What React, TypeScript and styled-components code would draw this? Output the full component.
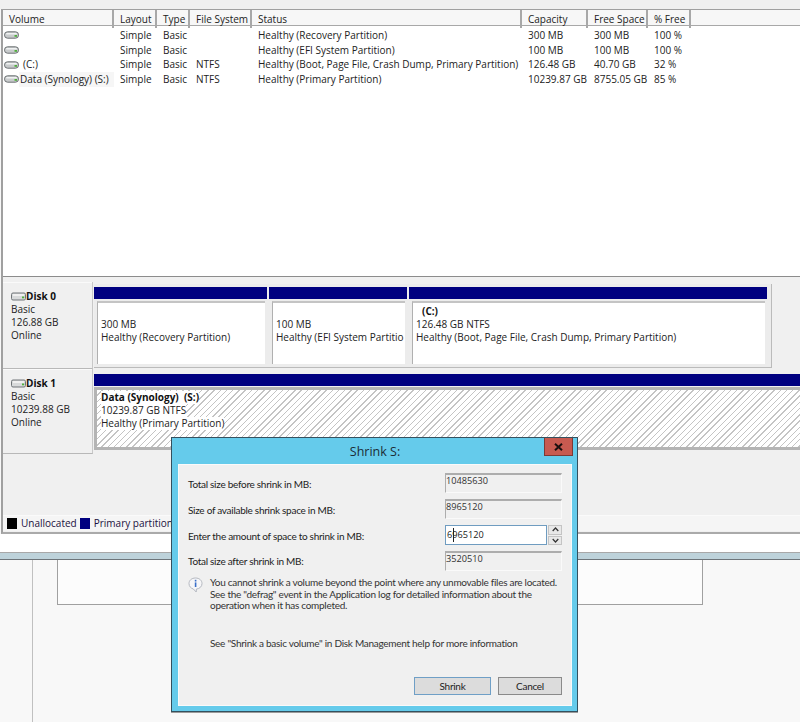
import React from "react";
import styled, { createGlobalStyle } from "styled-components";

const Global = createGlobalStyle`
  html, body { margin: 0; padding: 0; background: #f8f8f8; overflow: hidden; }
  #root { width: 800px; height: 722px; }
`;

const Page = styled.div`
  position: relative;
  width: 800px;
  height: 722px;
  display: flex;
  flex-direction: column;
  overflow: hidden;
  font-family: "Open Sans", "Liberation Sans", sans-serif;
  font-size: 10px;
  color: #222;
  line-height: 13px;
`;
const TopStrip = styled.div`
  height: 9px;
  flex: none;
  background: #f0f0f0;
`;
const Console = styled.div`
  height: 523px;
  flex: none;
  margin-left: 1px;
  border-left: 2px solid #a0a0a0;
  border-bottom: 2px solid #aaa;
  display: flex;
  flex-direction: column;
`;
const ListPane = styled.div`
  height: 266px;
  flex: none;
  background: #fff;
  border-top: 1px solid #a0a0a0;
`;
const COLS = "111px 43px 33px 62px 270px 66px 60px 43px 1fr";
const HeaderRow = styled.div`
  display: grid;
  grid-template-columns: ${COLS};
  height: 15px;
  background: #f7f7f7;
  border-bottom: 1px solid #a8a8a8;
  margin-bottom: 2px;
`;
const HeaderCell = styled.div`
  padding-left: 6px;
  border-right: 2px solid #a8a8a8;
  box-sizing: border-box;
  line-height: 18px;
  white-space: nowrap;
  &:last-child { border-right: none; }
`;
const Row = styled.div`
  display: grid;
  grid-template-columns: ${COLS};
  height: 14.7px;
  line-height: 14.7px;
`;
const Cell = styled.div`
  padding-left: 6px;
  white-space: nowrap;
`;
const VolumeCell = styled.div<{ $selected?: boolean; $named?: boolean }>`
  display: flex;
  align-items: center;
  gap: ${(p) => (p.$named ? "1px" : "4px")};
  padding-left: 1px;
  white-space: nowrap;
  ${(p) => (p.$selected ? "background: linear-gradient(90deg, #fff 14%, #f6f6f6 14%);" : "")}
`;
const DiskArea = styled.div`
  flex: 1;
  background: #f0f0f0;
  border-top: 1px solid #8c8c8c;
  padding-top: 5px;
  display: flex;
  flex-direction: column;
`;
const DiskRow = styled.div<{ $h: number }>`
  height: ${(p) => p.$h}px;
  flex: none;
  display: flex;
`;
const DiskCard = styled.div`
  width: 90px;
  flex: none;
  box-sizing: border-box;
  padding: 8px 0 0 8px;
  background: #f0f0f0;
  border-right: 1px solid #c8c8c8;
  border-bottom: 1px solid #b8b8b8;
  box-shadow: inset 0 1px 0 #fafafa;
`;
const DiskName = styled.div`
  display: flex;
  align-items: center;
  gap: 0;
  font-weight: 700;
  color: #111;
`;
const DiskLine = styled.div``;
const Group = styled.div`
  flex: 1;
  display: flex;
  gap: 2px;
  margin: 2px 28px 1px 1px;
  padding: 3px 2px 3px 0;
  background: #ececec;
  border-right: 1px solid #bbb;
  border-bottom: 1px solid #bbb;
`;
const Partition = styled.div<{ $w: number }>`
  width: ${(p) => p.$w}px;
  flex: none;
  display: flex;
  flex-direction: column;
`;
const NavyBar = styled.div<{ $h: number }>`
  height: ${(p) => p.$h}px;
  flex: none;
  background: #000080;
`;
const PartBody = styled.div`
  flex: 1;
  margin: 2px 2px 0 3px;
  padding: 2px 0 0 3px;
  background: #fff;
  border-top: 2px solid #c4c4c4;
  border-left: 1px solid #b0b0b0;
  overflow: hidden;
  white-space: nowrap;
`;
const Bold = styled.div<{ $indent?: number }>`
  height: 13px;
  font-weight: 700;
  margin-left: ${(p) => p.$indent ?? 0}px;
  color: #111;
`;
const Disk1Group = styled.div`
  flex: 1;
  margin: 5px 0 4px 1px;
  display: flex;
  flex-direction: column;
`;
const Hatched = styled.div`
  flex: 1;
  margin-top: 1px;
  border: 3px solid #b4b4b4;
  border-right: none;
  padding: 1px 0 0 4px;
  background: repeating-linear-gradient(135deg, #fff 0, #fff 3.4px, #c4c4c4 3.4px, #c4c4c4 4.4px);
`;
const LabelLine = styled.div`
  width: fit-content;
  background: #fff;
`;
const Spacer = styled.div`
  flex: 1;
`;
const Legend = styled.div`
  height: 15px;
  flex: none;
  margin-bottom: 1px;
  display: flex;
  align-items: center;
  background: #f5f5f5;
  border-top: 1px solid #fafafa;
  padding-left: 1px;
  line-height: 15px;
`;
const Swatch = styled.span<{ $c: string }>`
  width: 10px;
  height: 11px;
  flex: none;
  background: ${(p) => p.$c};
  margin-right: 4px;
  margin-left: 3px;
`;
const LegendText = styled.span`
  color: #1b1040;
`;
const WhiteStrip = styled.div`
  height: 18px;
  flex: none;
  background: #fff;
  border-bottom: 1px solid #a8a8a8;
`;
const BlueStrip = styled.div`
  height: 6px;
  flex: none;
  background: #bdd2da;
  border-bottom: 1px solid #6d7479;
`;
const Lower = styled.div`
  flex: 1;
  background: #f8f8f8;
  display: flex;
`;
const TreeColumn = styled.div`
  width: 32px;
  flex: none;
  border-right: 1px solid #c0c0c0;
`;
const PreviewBox = styled.div`
  width: 644px;
  height: 44px;
  margin-left: 24px;
  background: #fcfcfc;
  border-right: 1px solid #a0a0a0;
  border-bottom: 1px solid #a0a0a0;
  border-left: 1px solid #a0a0a0;
`;

const Dialog = styled.div`
  position: absolute;
  left: 171px;
  top: 437px;
  width: 407px;
  height: 275px;
  box-sizing: border-box;
  background: #65cbeb;
  border: 1px solid #34505e;
  box-shadow: 0 1px 0 #9a9a9a;
  display: flex;
  flex-direction: column;
  padding: 0 5px 5px 6px;
  color: #222;
  font-family: "Lato", "Open Sans", sans-serif;
`;
const TitleBar = styled.div`
  height: 26px;
  flex: none;
  position: relative;
  display: flex;
  align-items: center;
  justify-content: center;
  box-sizing: border-box;
  font-family: "Open Sans", sans-serif;
  font-size: 12.5px;
  color: #1c2c36;
`;
const CloseButton = styled.div`
  position: absolute;
  right: -1px;
  top: 0;
  width: 29px;
  height: 18px;
  box-sizing: border-box;
  background: #c75a50;
  border: 1px solid #7b3a36;
  border-top: none;
  display: flex;
  align-items: center;
  justify-content: center;
`;
const DialogBody = styled.div`
  flex: 1;
  background: #f0f0f0;
  border: 1px solid #fafafa;
  box-sizing: border-box;
  padding: 6px 9px 10px 9px;
  display: flex;
  flex-direction: column;
  letter-spacing: -0.28px;
`;
const FormRow = styled.div<{ $h: number }>`
  height: ${(p) => p.$h}px;
  flex: none;
  display: flex;
  align-items: center;
  justify-content: space-between;
`;
const FieldValue = styled.div`
  font-family: "Open Sans", sans-serif;
  font-size: 9.2px;
  letter-spacing: 0;
`;
const ReadField = styled(FieldValue)`
  width: 117px;
  height: 20px;
  margin-bottom: 2px;
  box-sizing: border-box;
  background: #f0f0f0;
  border-top: 2px solid #adadad;
  border-left: 1px solid #adadad;
  border-right: 1px solid #fafafa;
  border-bottom: 1px solid #fafafa;
  line-height: 11px;
  padding-left: 0;
  color: #333;
`;
const SpinWrap = styled.div`
  width: 117px;
  height: 20px;
  margin-bottom: 2px;
  display: flex;
  gap: 1px;
`;
const SpinInput = styled(FieldValue)`
  flex: 1;
  background: #fff;
  border: 1px solid #6f9cc0;
  box-sizing: border-box;
  line-height: 17px;
  padding-left: 1px;
  position: relative;
  color: #222;
`;
const Caret = styled.span`
  position: absolute;
  left: 7px;
  top: 2px;
  width: 1px;
  height: 14px;
  background: #222;
`;
const SpinButtons = styled.div`
  width: 14px;
  display: flex;
  flex-direction: column;
  gap: 1px;
`;
const SpinButton = styled.div`
  flex: 1;
  background: #e8e8e8;
  border: 1px solid #c4c4c4;
  box-sizing: border-box;
  display: flex;
  align-items: center;
  justify-content: center;
`;
const InfoRow = styled.div`
  margin-top: 3px;
  display: flex;
  gap: 7px;
`;
const InfoText = styled.div`
  width: 356px;
  font-size: 10px;
  line-height: 11.5px;
  color: #333;
`;
const HelpText = styled.div`
  margin: 25px 0 0 22px;
  font-size: 10px;
  line-height: 12px;
  color: #333;
`;
const Buttons = styled.div`
  margin-top: auto;
  display: flex;
  justify-content: flex-end;
  gap: 7px;
`;
const DialogButton = styled.div<{ $w: number; $default?: boolean }>`
  width: ${(p) => p.$w}px;
  height: 18px;
  box-sizing: border-box;
  background: #dcdcdc;
  border: 1px solid ${(p) => (p.$default ? "#6f9fc6" : "#8a8a8a")};
  text-align: center;
  line-height: 16px;
  font-size: 10px;
  color: #222;
`;

const DriveIcon = () => (
  <svg width="15" height="8" viewBox="0 0 15 8">
    <rect x="0.5" y="0.8" width="14" height="6.4" rx="3" fill="#c8cbcc" stroke="#6d7274" strokeWidth="1" />
    <rect x="2" y="2" width="11" height="1.6" rx="0.8" fill="#f0f2f2" />
    <rect x="10.5" y="4" width="2.5" height="1.8" fill="#4fae3c" />
  </svg>
);
const DiskIcon = () => (
  <svg width="15" height="9" viewBox="0 0 15 9">
    <rect x="0.5" y="1" width="14" height="7" rx="1.5" fill="#d8dadb" stroke="#707578" strokeWidth="1" />
    <rect x="2" y="2.2" width="11" height="1.6" fill="#f5f6f6" />
    <rect x="11" y="4.5" width="2.2" height="1.8" fill="#4fae3c" />
  </svg>
);
const InfoIcon = () => (
  <svg width="15" height="16" viewBox="0 0 15 16" style={{ flex: "none" }}>
    <path d="M7.5 1 C3.6 1 1 3.4 1 6.6 C1 9.4 3 11.4 5.4 12 L8.2 15 L8.4 12.1 C11.6 11.7 14 9.6 14 6.6 C14 3.4 11.4 1 7.5 1 Z" fill="#f6f6f8" stroke="#b4b8c0" strokeWidth="1" />
    <rect x="6.8" y="2.8" width="1.6" height="1.7" fill="#3a6fc8" />
    <rect x="6.8" y="5.4" width="1.6" height="4.6" fill="#3a6fc8" />
  </svg>
);
const CloseGlyph = () => (
  <svg width="9" height="8" viewBox="0 0 9 8">
    <path d="M1 0.8 L8 7.2 M8 0.8 L1 7.2" stroke="#1a0f0f" strokeWidth="2" fill="none" />
  </svg>
);
const Chevron = ({ up }: { up?: boolean }) => (
  <svg width="7" height="5" viewBox="0 0 7 5">
    <path d={up ? "M0.7 4 L3.5 1 L6.3 4" : "M0.7 1 L3.5 4 L6.3 1"} stroke="#333" strokeWidth="1.2" fill="none" />
  </svg>
);

const headers = ["Volume", "Layout", "Type", "File System", "Status", "Capacity", "Free Space", "% Free", ""];
const rows = [
  { vol: "", fs: "", status: "Healthy (Recovery Partition)", cap: "300 MB", free: "300 MB", pct: "100 %" },
  { vol: "", fs: "", status: "Healthy (EFI System Partition)", cap: "100 MB", free: "100 MB", pct: "100 %" },
  { vol: "(C:)", fs: "NTFS", status: "Healthy (Boot, Page File, Crash Dump, Primary Partition)", cap: "126.48 GB", free: "40.70 GB", pct: "32 %" },
  { vol: "Data (Synology) (S:)", fs: "NTFS", status: "Healthy (Primary Partition)", cap: "10239.87 GB", free: "8755.05 GB", pct: "85 %", selected: true },
];

export default function App() {
  return (
    <Page>
      <Global />
      <TopStrip />
      <Console>
        <ListPane>
          <HeaderRow>
            {headers.map((h, i) => (
              <HeaderCell key={i}>{h}</HeaderCell>
            ))}
          </HeaderRow>
          {rows.map((r, i) => (
            <Row key={i}>
              <VolumeCell $selected={r.selected} $named={r.selected}>
                <DriveIcon />
                {r.vol}
              </VolumeCell>
              <Cell>Simple</Cell>
              <Cell>Basic</Cell>
              <Cell>{r.fs}</Cell>
              <Cell>{r.status}</Cell>
              <Cell>{r.cap}</Cell>
              <Cell>{r.free}</Cell>
              <Cell>{r.pct}</Cell>
            </Row>
          ))}
        </ListPane>
        <DiskArea>
          <DiskRow $h={87}>
            <DiskCard>
              <DiskName><DiskIcon />Disk 0</DiskName>
              <DiskLine>Basic</DiskLine>
              <DiskLine>126.88 GB</DiskLine>
              <DiskLine>Online</DiskLine>
            </DiskCard>
            <Group>
              <Partition $w={173}>
                <NavyBar $h={12} />
                <PartBody>
                  <Bold />
                  <div>300 MB</div>
                  <div>Healthy (Recovery Partition)</div>
                </PartBody>
              </Partition>
              <Partition $w={138}>
                <NavyBar $h={12} />
                <PartBody>
                  <Bold />
                  <div>100 MB</div>
                  <div>Healthy (EFI System Partitio</div>
                </PartBody>
              </Partition>
              <Partition $w={358}>
                <NavyBar $h={12} />
                <PartBody>
                  <Bold $indent={6}>(C:)</Bold>
                  <div>126.48 GB NTFS</div>
                  <div>Healthy (Boot, Page File, Crash Dump, Primary Partition)</div>
                </PartBody>
              </Partition>
            </Group>
          </DiskRow>
          <DiskRow $h={85}>
            <DiskCard>
              <DiskName><DiskIcon />Disk 1</DiskName>
              <DiskLine>Basic</DiskLine>
              <DiskLine>10239.88 GB</DiskLine>
              <DiskLine>Online</DiskLine>
            </DiskCard>
            <Disk1Group>
              <NavyBar $h={12} />
              <Hatched>
                <LabelLine><Bold>Data (Synology)&nbsp; (S:)</Bold></LabelLine>
                <LabelLine>10239.87 GB NTFS</LabelLine>
                <LabelLine>Healthy (Primary Partition)</LabelLine>
              </Hatched>
            </Disk1Group>
          </DiskRow>
          <Spacer />
          <Legend>
            <Swatch $c="#000" />
            <LegendText>Unallocated</LegendText>
            <Swatch $c="#000080" />
            <LegendText>Primary partition</LegendText>
          </Legend>
        </DiskArea>
      </Console>
      <WhiteStrip />
      <BlueStrip />
      <Lower>
        <TreeColumn />
        <PreviewBox />
      </Lower>
      <Dialog>
        <TitleBar>
          Shrink S:
          <CloseButton><CloseGlyph /></CloseButton>
        </TitleBar>
        <DialogBody>
          <FormRow $h={26}>
            <span>Total size before shrink in MB:</span>
            <ReadField>10485630</ReadField>
          </FormRow>
          <FormRow $h={26}>
            <span>Size of available shrink space in MB:</span>
            <ReadField>8965120</ReadField>
          </FormRow>
          <FormRow $h={26}>
            <span>Enter the amount of space to shrink in MB:</span>
            <SpinWrap>
              <SpinInput>6965120<Caret /></SpinInput>
              <SpinButtons>
                <SpinButton><Chevron up /></SpinButton>
                <SpinButton><Chevron /></SpinButton>
              </SpinButtons>
            </SpinWrap>
          </FormRow>
          <FormRow $h={25}>
            <span>Total size after shrink in MB:</span>
            <ReadField>3520510</ReadField>
          </FormRow>
          <InfoRow>
            <InfoIcon />
            <InfoText>
              You cannot shrink a volume beyond the point where any unmovable files are located. See the "defrag" event in the Application log for detailed information about the operation when it has completed.
            </InfoText>
          </InfoRow>
          <HelpText>See "Shrink a basic volume" in Disk Management help for more information</HelpText>
          <Buttons>
            <DialogButton $w={77} $default>Shrink</DialogButton>
            <DialogButton $w={64}>Cancel</DialogButton>
          </Buttons>
        </DialogBody>
      </Dialog>
    </Page>
  );
}
